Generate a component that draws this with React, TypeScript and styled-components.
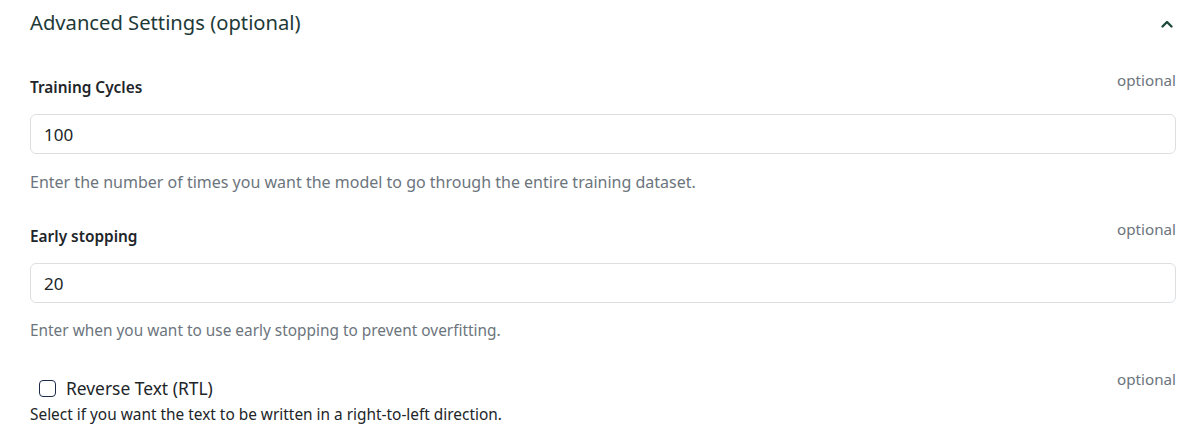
import React, { useState } from "react";
import styled, { createGlobalStyle } from "styled-components";

const GlobalStyle = createGlobalStyle`
  body {
    margin: 0;
    background: #ffffff;
    font-family: "Noto Sans", "Open Sans", sans-serif;
    color: #212529;
  }
`;

const Panel = styled.section`
  padding: 0 28px 0 30px;
`;

const Header = styled.div`
  height: 43px;
  display: flex;
  align-items: center;
  justify-content: space-between;
  cursor: pointer;
`;

const Title = styled.h2`
  margin: 0;
  font-size: 20.2px;
  font-weight: 400;
  line-height: 24px;
  color: #1e3a38;
`;

const Chevron = styled.svg`
  width: 14px;
  height: 14px;
  margin-right: 2px;
  margin-top: 5px;
  color: #1f4a3c;
`;

const Field = styled.div<{ $gap?: number }>`
  margin-top: ${({ $gap }) => $gap ?? 27}px;
`;

const LabelRow = styled.div`
  display: flex;
  justify-content: space-between;
  align-items: flex-start;
`;

const Label = styled.label`
  margin-top: 8px;
  font-size: 15.4px;
  font-weight: 600;
  line-height: 20px;
  color: #212529;
`;

const Optional = styled.span`
  font-size: 15.2px;
  line-height: 20px;
  color: #6c757d;
`;

const Input = styled.input`
  box-sizing: border-box;
  display: block;
  width: 100%;
  height: 40px;
  margin-top: 16px;
  padding: 0 13px;
  border: 1px solid #dcdfe2;
  border-radius: 6px;
  font-family: "Noto Sans", sans-serif;
  font-size: 17px;
  color: #212529;
  outline: none;
`;

const Help = styled.p<{ $size?: number }>`
  margin: 18px 0 0;
  font-size: ${({ $size }) => $size ?? 16}px;
  line-height: 20px;
  color: #6c757d;
`;

const CheckHelp = styled.p`
  margin: 7px 0 0;
  font-size: 15.4px;
  line-height: 20px;
  color: #212529;
`;

const CheckRow = styled.label`
  display: flex;
  align-items: center;
  gap: 10px;
  margin-top: 9px;
  padding-left: 9px;
  font-size: 17.4px;
  line-height: 20px;
  color: #212529;
  cursor: pointer;
`;

const Checkbox = styled.input`
  appearance: none;
  box-sizing: border-box;
  width: 17px;
  height: 17px;
  margin: 0;
  border: 1.5px solid #1c2a48;
  border-radius: 4px;
  background: #fff;
  &:checked {
    background: #1f4a3c;
    border-color: #1f4a3c;
  }
`;

export default function App() {
  const [cycles, setCycles] = useState("100");
  const [stopping, setStopping] = useState("20");
  const [rtl, setRtl] = useState(false);

  return (
    <>
      <GlobalStyle />
      <Panel>
        <Header>
          <Title>Advanced Settings (optional)</Title>
          <Chevron viewBox="0 0 14 14" fill="none">
            <path
              d="M2.5 9.5 7 5l4.5 4.5"
              stroke="currentColor"
              strokeWidth="2.4"
              strokeLinecap="round"
              strokeLinejoin="round"
            />
          </Chevron>
        </Header>

        <Field>
          <LabelRow>
            <Label htmlFor="cycles">Training Cycles</Label>
            <Optional>optional</Optional>
          </LabelRow>
          <Input id="cycles" value={cycles} onChange={(e) => setCycles(e.target.value)} />
          <Help>Enter the number of times you want the model to go through the entire training dataset.</Help>
        </Field>

        <Field>
          <LabelRow>
            <Label htmlFor="stopping">Early stopping</Label>
            <Optional>optional</Optional>
          </LabelRow>
          <Input id="stopping" value={stopping} onChange={(e) => setStopping(e.target.value)} />
          <Help $size={15.4}>Enter when you want to use early stopping to prevent overfitting.</Help>
        </Field>

        <Field $gap={28}>
          <LabelRow>
            <CheckRow>
              <Checkbox type="checkbox" checked={rtl} onChange={(e) => setRtl(e.target.checked)} />
              Reverse Text (RTL)
            </CheckRow>
            <Optional>optional</Optional>
          </LabelRow>
          <CheckHelp>Select if you want the text to be written in a right-to-left direction.</CheckHelp>
        </Field>
      </Panel>
    </>
  );
}
